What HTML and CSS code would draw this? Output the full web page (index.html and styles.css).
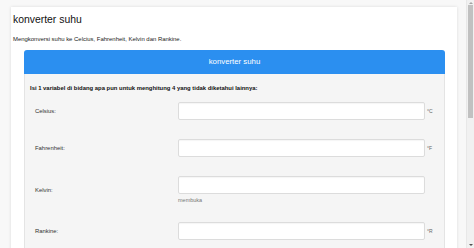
FILE: index.html
```html
<!DOCTYPE html>
<html lang="id">
<head>
<meta charset="utf-8">
<title>konverter suhu</title>
<link rel="stylesheet" href="styles.css">
</head>
<body>
<main class="page">
  <div class="card">
    <h1 class="title">konverter suhu</h1>
    <p class="desc">Mengkonversi suhu ke Celcius, Fahrenheit, Kelvin dan Rankine.</p>
    <section class="panel">
      <div class="panel-head">konverter suhu</div>
      <div class="panel-body">
        <p class="intro">Isi 1 variabel di bidang apa pun untuk menghitung 4 yang tidak diketahui lainnya:</p>
        <div class="row">
          <label class="label">Celsius:</label>
          <div class="field"><input class="input" type="text"></div>
          <span class="unit">°C</span>
        </div>
        <div class="row">
          <label class="label">Fahrenheit:</label>
          <div class="field"><input class="input" type="text"></div>
          <span class="unit">°F</span>
        </div>
        <div class="row">
          <label class="label">Kelvin:</label>
          <div class="field"><input class="input" type="text"><div class="help">membuka</div></div>
          <span class="unit"></span>
        </div>
        <div class="row">
          <label class="label">Rankine:</label>
          <div class="field"><input class="input" type="text"></div>
          <span class="unit">°R</span>
        </div>
      </div>
    </section>
  </div>
</main>
<div class="scrollbar">
  <div class="arrow up"></div>
  <div class="thumb"></div>
  <div class="arrow down"></div>
</div>
</body>
</html>
```
FILE: styles.css
```css
html, body {
  margin: 0;
  padding: 0;
}
body {
  width: 474px;
  height: 248px;
  overflow: hidden;
  display: flex;
  background: #f8f8f8;
  font-family: "Liberation Sans", Arial, sans-serif;
  color: #222;
}
.page {
  flex: 1;
  padding: 7px 9px 0 11px;
}
.card {
  background: #fff;
  box-shadow: 0 0 3px rgba(0,0,0,0.12);
  padding: 7px 12px 40px 2px;
  height: 400px;
}
.title {
  margin: 0;
  font-size: 10.4px;
  line-height: 12px;
  font-weight: normal;
  color: #111;
}
.desc {
  margin: 10px 0 7px;
  font-size: 5.95px;
  line-height: 7px;
  color: #222;
}
.panel {
  margin-left: 11px;
}
.panel-head {
  height: 24px;
  line-height: 24px;
  background: #2b8ff0;
  color: #fff;
  text-align: center;
  font-size: 7.8px;
  border-radius: 3px 3px 0 0;
}
.panel-body {
  background: #f5f5f5;
  border: 1px solid #e4e4e4;
  border-top: none;
  padding: 11px 0 20px 5px;
}
.intro {
  margin: 0 0 10px;
  font-size: 5.9px;
  line-height: 7px;
  font-weight: bold;
  color: #111;
}
.row {
  display: flex;
  align-items: center;
  margin-bottom: 19px;
}
.label {
  width: 143px;
  padding-left: 5px;
  font-size: 5.9px;
  color: #333;
}
.field {
  width: 247px;
  display: flex;
  flex-direction: column;
}
.input {
  box-sizing: border-box;
  width: 247px;
  height: 18px;
  margin: 0;
  padding: 0 4px;
  background: #fff;
  border: 1px solid #dcdcdc;
  border-radius: 2px;
  box-shadow: inset 0 1px 1px rgba(0,0,0,0.04);
  outline: none;
}
.help {
  margin-top: 3px;
  font-size: 5.5px;
  line-height: 6px;
  color: #777;
}
.unit {
  margin-left: 2px;
  font-size: 5px;
  color: #666;
}
.scrollbar {
  width: 7px;
  flex: none;
  background: #f1f1f1;
  border-left: 1px solid #e8e8e8;
  display: flex;
  flex-direction: column;
  align-items: center;
}
.thumb {
  width: 5px;
  height: 113px;
  margin-top: 1px;
  background: #c1c1c1;
}
.arrow {
  width: 0;
  height: 0;
  border-left: 2px solid transparent;
  border-right: 2px solid transparent;
  margin-top: 2px;
}
.arrow.up {
  border-bottom: 2px solid #a3a3a3;
}
.arrow.down {
  margin-top: auto;
  margin-bottom: 2px;
  border-top: 2px solid #505050;
}
```
